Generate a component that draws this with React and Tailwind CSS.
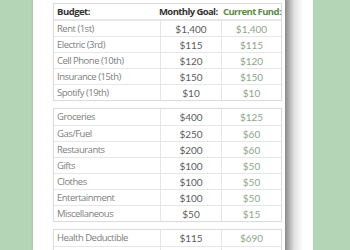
const FIXED = [
  ['Rent (1st)', '$1,400', '$1,400'],
  ['Electric (3rd)', '$115', '$115'],
  ['Cell Phone (10th)', '$120', '$120'],
  ['Insurance (15th)', '$150', '$150'],
  ['Spotify (19th)', '$10', '$10']
]

const FLEX = [
  ['Groceries', '$400', '$125'],
  ['Gas/Fuel', '$250', '$60'],
  ['Restaurants', '$200', '$60'],
  ['Gifts', '$100', '$50'],
  ['Clothes', '$100', '$50'],
  ['Entertainment', '$100', '$50'],
  ['Miscellaneous', '$50', '$15']
]

// last row runs off the bottom edge, only its top border shows
const SAVINGS = [
  ['Health Deductible', '$115', '$690'],
  ['', '', '']
]

function Row({ label, goal, fund }) {
  return (
    <div className="flex h-[16px] border-t border-[#e6e6e6] first:border-t-0">
      <div className="w-[106px] pl-[3px] flex items-center text-[#808080] tracking-[-0.5px]">{label}</div>
      <div className="w-[61px] border-l border-[#e6e6e6] flex items-center justify-center font-['Lato',sans-serif] text-[10px] text-[#5c5c5c]">{goal}</div>
      <div className="flex-1 border-l border-[#e6e6e6] flex items-center justify-center font-['Lato',sans-serif] text-[10px] text-[#8ea58b]">{fund}</div>
    </div>
  )
}

function Table({ rows, header }) {
  return (
    <div className="border border-[#dcdcdc] bg-white shadow-[0_0_1px_rgba(0,0,0,0.08)]">
      {header && (
        <div className="flex h-[16px] border-b border-[#e6e6e6] font-bold">
          <div className="w-[106px] pl-[3px] flex items-center text-[#333] tracking-[-0.5px]">Budget:</div>
          <div className="w-[61px] pl-[3px] flex items-center text-[#333] tracking-[-0.6px] whitespace-nowrap">Monthly Goal:</div>
          <div className="flex-1 pl-[6px] flex items-center text-[#5e8c4e] tracking-[-0.6px] whitespace-nowrap">Current Fund:</div>
        </div>
      )}
      {rows.map((r, i) => (
        <Row key={i} label={r[0]} goal={r[1]} fund={r[2]} />
      ))}
    </div>
  )
}

export default function App() {
  return (
    <div className="flex w-[350px] h-[250px] overflow-hidden bg-[#b4d5b6] font-['Open_Sans',sans-serif] text-[9.5px] leading-none">
      <div className="w-[33px] shrink-0" />
      <div className="w-[252px] shrink-0 bg-white pl-[20px] pr-[3px] pt-[3px] flex flex-col gap-[7px] shadow-[-1px_0_2px_rgba(0,0,0,0.06)]">
        <Table rows={FIXED} header />
        <Table rows={FLEX} />
        <Table rows={SAVINGS} />
      </div>
      <div className="w-[18px] shrink-0 bg-gradient-to-r from-[#8a8a8a] via-[#e0e0e0] to-white" />
      <div className="w-[10px] shrink-0 bg-white" />
    </div>
  )
}
